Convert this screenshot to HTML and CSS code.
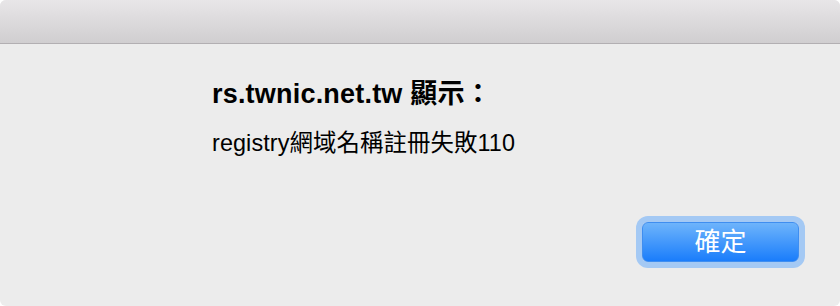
FILE: index.html
```html
<!DOCTYPE html>
<html lang="zh-Hant">
<head>
<meta charset="utf-8">
<link rel="stylesheet" href="styles.css">
</head>
<body>
<div class="window">
  <div class="titlebar"></div>
  <div class="content">
    <div class="title">rs.twnic.net.tw 顯示：</div>
    <div class="message">registry網域名稱註冊失敗110</div>
  </div>
  <div class="actions">
    <button class="ok">確定</button>
  </div>
</div>
</body>
</html>
```
FILE: styles.css
```css
html, body {
  margin: 0;
  padding: 0;
  background: #ffffff;
}
.window {
  width: 840px;
  height: 306px;
  background: #ececec;
  border-radius: 6px;
  overflow: hidden;
  font-family: "Liberation Sans", "Noto Sans CJK TC", sans-serif;
  color: #000;
}
.titlebar {
  height: 43px;
  background: linear-gradient(#e8e6e8, #d0ced0);
  border-bottom: 1px solid #b2afb2;
}
.content {
  padding: 34px 0 0 212px;
}
.title {
  font-size: 27px;
  font-weight: bold;
  line-height: 32px;
  height: 32px;
  letter-spacing: 0.2px;
}
.message {
  margin-top: 19px;
  font-size: 23.4px;
  line-height: 28px;
  height: 28px;
  letter-spacing: 0.1px;
}
.actions {
  display: flex;
  justify-content: flex-end;
  padding-right: 41px;
  margin-top: 65px;
}
.ok {
  width: 157px;
  height: 40px;
  border: 1px solid #3f8ef0;
  border-radius: 6px;
  background: linear-gradient(#6eb4fb, #1a7dfb);
  box-shadow: 0 0 0 6px #a4c9f4;
  color: #fff;
  font-family: "Liberation Sans", "Noto Sans CJK TC", sans-serif;
  font-size: 26px;
  line-height: 38px;
  padding: 0;
}
```
